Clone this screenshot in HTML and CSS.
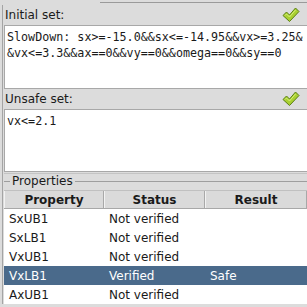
FILE: index.html
```html
<!DOCTYPE html>
<html>
<head>
<meta charset="utf-8">
<link rel="stylesheet" href="styles.css">
</head>
<body>
<div class="top"><div class="top-line"></div></div>
<div class="panel">
  <div class="head">
    <span class="label">Initial set:</span>
    <svg class="check" width="18" height="16" viewBox="0 0 18 16"><path d="M1 8.5 L4.5 5 L7.5 8 L13.5 1 L17 4.5 L7.5 14.5 Z" fill="#a9d031" stroke="#5a7f14" stroke-width="1" stroke-linejoin="round"/><path d="M3 8.5 L4.5 7 L7.5 10 L13.5 3" fill="none" stroke="#d6ef7a" stroke-width="1"/></svg>
  </div>
  <div class="box box-init">SlowDown: sx&gt;=-15.0&amp;&amp;sx&lt;=-14.95&amp;&amp;vx&gt;=3.25&amp;<br>&amp;vx&lt;=3.3&amp;&amp;ax==0&amp;&amp;vy==0&amp;&amp;omega==0&amp;&amp;sy==0</div>
  <div class="head">
    <span class="label">Unsafe set:</span>
    <svg class="check" width="18" height="16" viewBox="0 0 18 16"><path d="M1 8.5 L4.5 5 L7.5 8 L13.5 1 L17 4.5 L7.5 14.5 Z" fill="#a9d031" stroke="#5a7f14" stroke-width="1" stroke-linejoin="round"/><path d="M3 8.5 L4.5 7 L7.5 10 L13.5 3" fill="none" stroke="#d6ef7a" stroke-width="1"/></svg>
  </div>
  <div class="box box-unsafe">vx&lt;=2.1</div>
  <div class="splitter"></div>
  <div class="group">
    <div class="legend">Properties</div>
    <div class="table">
      <div class="row header">
        <div class="c c1">Property</div>
        <div class="c c2">Status</div>
        <div class="c c3">Result</div>
      </div>
      <div class="row"><div class="c c1">SxUB1</div><div class="c c2">Not verified</div><div class="c c3"></div></div>
      <div class="row"><div class="c c1">SxLB1</div><div class="c c2">Not verified</div><div class="c c3"></div></div>
      <div class="row"><div class="c c1">VxUB1</div><div class="c c2">Not verified</div><div class="c c3"></div></div>
      <div class="row sel"><div class="c c1">VxLB1</div><div class="c c2">Verified</div><div class="c c3">Safe</div></div>
      <div class="row"><div class="c c1">AxUB1</div><div class="c c2">Not verified</div><div class="c c3"></div></div>
    </div>
  </div>
</div>
</body>
</html>
```
FILE: styles.css
```css
html, body {
  margin: 0;
  padding: 0;
}
body {
  width: 307px;
  height: 307px;
  overflow: hidden;
  background: #dcdcdc;
  font-family: "DejaVu Sans", sans-serif;
  font-size: 12px;
  color: #1a1a1a;
}
.top {
  height: 3px;
}
.top-line {
  margin-left: 100px;
  height: 1px;
  margin-top: 2px;
  background: #9a9a9a;
}
.panel {
  margin-left: 2px;
  border-left: 1px solid #a4a4a4;
  padding-left: 1px;
}
.head {
  height: 20px;
  display: flex;
  align-items: center;
  justify-content: space-between;
  padding-left: 1px;
  padding-right: 7px;
}
.label {
  font-size: 12px;
}
.box {
  background: #fff;
  border: 1px solid #a8a8a8;
  border-right: none;
  font-family: "DejaVu Sans Mono", monospace;
  font-size: 11.7px;
  line-height: 16px;
  padding: 3px 0 0 2px;
  box-sizing: border-box;
  white-space: nowrap;
}
.box-init {
  height: 64px;
}
.box-unsafe {
  height: 63px;
}
.splitter {
  height: 1px;
  border-bottom: 1px solid #c4c4c4;
}
.group {
  position: relative;
  margin-top: 7px;
  border-top: 1px solid #9e9e9e;
}
.legend {
  position: absolute;
  top: -8px;
  left: 6px;
  padding: 0 2px;
  background: #dcdcdc;
  line-height: 14px;
}
.table {
  margin-top: 8px;
  background: #fff;
}
.row {
  display: flex;
  height: 19px;
  align-items: center;
}
.c {
  box-sizing: border-box;
  padding-left: 5px;
  white-space: nowrap;
}
.c1 { width: 100px; }
.c2 { width: 101px; }
.c3 { width: 102px; }
.header {
  background: #dadada;
  font-weight: bold;
  align-items: stretch;
  border-top: 1px solid #c0c0c0;
  border-bottom: 1px solid #a8a8a8;
  box-sizing: border-box;
}
.header .c {
  padding-left: 0;
  display: flex;
  align-items: center;
  justify-content: center;
  border-right: 1px solid #a8a8a8;
  border-left: 1px solid #f2f2f2;
}
.sel {
  background: #4a6a8b;
  color: #fff;
}
.check {
  display: block;
}
```
